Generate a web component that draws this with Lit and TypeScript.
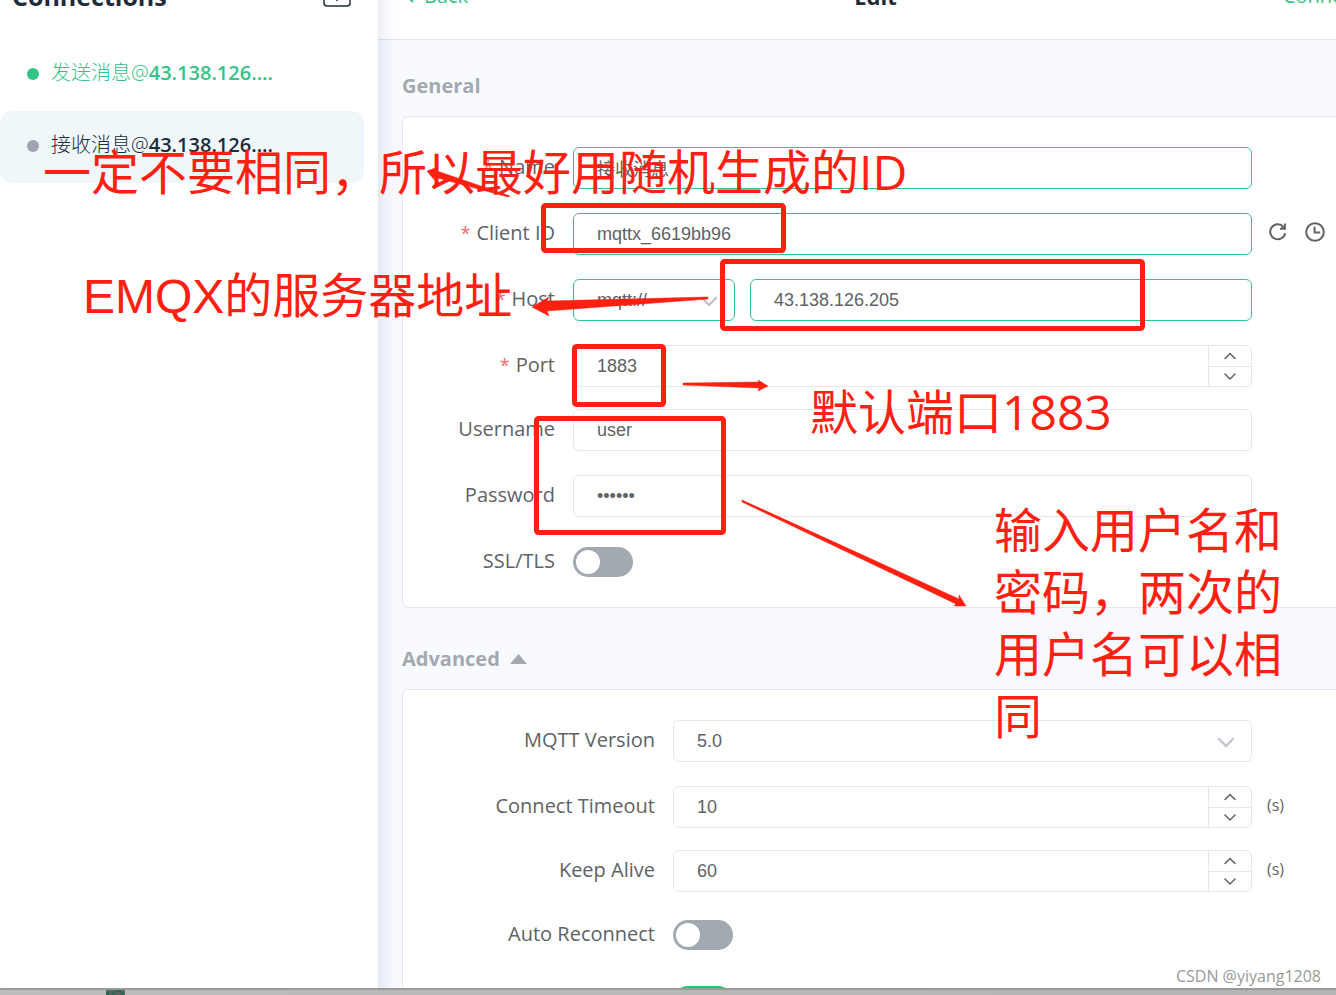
import { LitElement, html, svg, css, nothing } from "lit";
import type { TemplateResult } from "lit";
import { customElement, property, state } from "lit/decorators.js";
import { classMap } from "lit/directives/class-map.js";

interface Connection {
  alias: string;
  host: string;
  online: boolean;
}

@customElement("connection-list")
class ConnectionList extends LitElement {
  static styles = css`
    :host {
      display: block;
      background: #fff;
      color: #1d2b3a;
    }
    .head {
      display: flex;
      align-items: center;
      justify-content: space-between;
      height: 87px;
      padding: 0 27px 0 12px;
    }
    .title {
      margin: 0;
      font-size: 25px;
      line-height: 32px;
      font-weight: 700;
    }
    .add {
      display: flex;
      padding: 0;
      border: 0;
      background: none;
      color: inherit;
    }
    .list {
      margin: 0;
      padding: 0 14px 0 0;
      list-style: none;
    }
    .item {
      display: flex;
      align-items: center;
      gap: 12px;
      box-sizing: border-box;
      height: 72px;
      padding: 0 27px 4px;
      border-radius: 12px;
      color: inherit;
      text-decoration: none;
      font-size: 20px;
      line-height: 28px;
      white-space: nowrap;
    }
    .item.active {
      background: #f0f7fb;
    }
    .item.online {
      color: #34c388;
    }
    .dot {
      flex: none;
      width: 12px;
      height: 12px;
      margin-top: 2px;
      border-radius: 50%;
      background: #a0a3b1;
    }
    .online .dot {
      background: #34c388;
    }
    .alias {
      font-weight: 300;
    }
    .host {
      font-weight: 600;
    }
  `;

  private items: Connection[] = [
    { alias: "发送消息@", host: "43.138.126....", online: true },
    { alias: "接收消息@", host: "43.138.126....", online: false },
  ];

  @state() private active = 1;

  render() {
    return html`
      <header class="head">
        <h1 class="title">Connections</h1>
        <button class="add" aria-label="New connection">
          <svg width="28" height="22" viewBox="0 0 28 22" fill="none" stroke="currentColor" stroke-width="1.5">
            <rect x="1" y="1" width="26" height="20" rx="3" />
            <path d="M14 6v10M9 11h10" />
          </svg>
        </button>
      </header>
      <ul class="list">
        ${this.items.map(
          (c, i) => html`<li>
            <a
              href="#"
              class=${classMap({ item: true, active: i === this.active, online: c.online })}
              @click=${(e: Event) => {
                e.preventDefault();
                this.active = i;
              }}
            >
              <span class="dot"></span>
              <span><span class="alias">${c.alias}</span><span class="host">${c.host}</span></span>
            </a>
          </li>`
        )}
      </ul>
    `;
  }
}

@customElement("connection-form")
class ConnectionForm extends LitElement {
  @property({ type: Boolean }) advanced = true;

  static styles = css`
    :host {
      display: block;
      background: #f9faff;
      color: #606266;
    }
    .page {
      width: calc(100% + 48px);
    }
    .head {
      display: flex;
      align-items: center;
      justify-content: space-between;
      box-sizing: border-box;
      height: 88px;
      padding: 0 24px;
      background: #fff;
      border-bottom: 1px solid #e1e4ee;
    }
    .link {
      display: flex;
      align-items: center;
      gap: 8px;
      padding: 0;
      border: 0;
      background: none;
      color: #34c388;
      font: inherit;
      font-size: 20px;
      line-height: 28px;
      text-decoration: none;
    }
    .title {
      margin: 0;
      color: #1d2b3a;
      font-size: 22px;
      line-height: 28px;
      font-weight: 700;
    }
    .body {
      padding: 0 24px;
    }
    .section {
      display: flex;
      align-items: center;
      gap: 10px;
      margin: 0;
      padding: 32px 0 16px;
      color: #a2a9b0;
      font-size: 20px;
      line-height: 28px;
      font-weight: 700;
    }
    .section.next {
      padding-top: 37px;
    }
    .fold {
      display: flex;
      padding: 0;
      border: 0;
      background: none;
      color: inherit;
    }
    .card {
      display: flex;
      flex-direction: column;
      gap: 24px;
      padding: 30px 0 24px;
      background: #fff;
      border: 1px solid #e4e6f0;
      border-radius: 6px;
    }
    .row {
      display: grid;
      grid-template-columns: 152px 1fr 92px;
      align-items: center;
      height: 42px;
    }
    .wide .row {
      grid-template-columns: 252px 1fr 92px;
    }
    .row.number {
      height: 40px;
    }
    .label {
      padding-bottom: 2px;
      text-align: right;
      font-size: 20px;
      line-height: 28px;
      white-space: nowrap;
    }
    .star {
      margin-right: 6px;
      color: #f56c6c;
      font-size: 18px;
    }
    .control {
      display: flex;
      gap: 15px;
      margin: 0 15px 0 18px;
      min-width: 0;
    }
    .box {
      box-sizing: border-box;
      width: 100%;
      min-width: 0;
      height: 42px;
      padding: 0 23px;
      border: 1px solid #e4e6f0;
      border-radius: 6px;
      outline: none;
      background: #fff;
      color: #606266;
      font: 18px "Liberation Sans", "Noto Sans CJK SC", sans-serif;
      appearance: none;
    }
    .green {
      border-color: #34c388;
    }
    .pick {
      display: grid;
      flex: 1;
      align-items: center;
    }
    .pick.short {
      flex: 0 0 162px;
    }
    .pick > * {
      grid-area: 1 / 1;
    }
    .arrow {
      justify-self: end;
      margin: 4px 17px 0 0;
      color: #c0c4cc;
      pointer-events: none;
    }
    .stepper {
      display: flex;
      box-sizing: border-box;
      width: 100%;
      height: 42px;
      border: 1px solid #e4e6f0;
      border-radius: 6px;
      overflow: hidden;
    }
    .stepper .box {
      flex: 1;
      height: 40px;
      border: 0;
      border-radius: 0;
    }
    .steps {
      display: grid;
      grid-template-rows: 1fr 1fr;
      width: 42px;
      border-left: 1px solid #e4e6f0;
    }
    .step {
      display: grid;
      place-items: center;
      padding: 0;
      border: 0;
      background: none;
      color: #606266;
    }
    .step + .step {
      border-top: 1px solid #e4e6f0;
    }
    .extra {
      display: flex;
      align-items: center;
      gap: 16px;
      padding-bottom: 4px;
      font-size: 16px;
      line-height: 24px;
    }
    .icon {
      display: flex;
      padding: 0;
      border: 0;
      background: none;
      color: #606266;
    }
    .switch {
      box-sizing: border-box;
      width: 60px;
      height: 30px;
      margin: 0;
      padding: 3px;
      border-radius: 15px;
      background: #a2a9b0;
      appearance: none;
    }
    .switch::before {
      content: "";
      display: block;
      width: 24px;
      height: 24px;
      border-radius: 50%;
      background: #fff;
    }
    .switch:checked {
      padding-left: 33px;
      background: #20c871;
    }
  `;

  private row(id: string, label: string, control: TemplateResult, opts: { required?: boolean; number?: boolean; extra?: unknown } = {}) {
    return html`<div class=${classMap({ row: true, number: !!opts.number })}>
      <label class="label" for=${id}>${opts.required ? html`<span class="star">*</span>` : nothing}${label}</label>
      <div class="control">${control}</div>
      <div class="extra">${opts.extra ?? nothing}</div>
    </div>`;
  }

  private chevron() {
    return html`<svg class="arrow" width="18" height="12" viewBox="0 0 18 12" fill="none" stroke="currentColor" stroke-width="2.4" stroke-linecap="round">
      <path d="M2 2l7 7 7-7" />
    </svg>`;
  }

  private stepper(id: string, value: string) {
    const mark = (d: string) => html`<svg width="12" height="8" viewBox="0 0 12 8" fill="none" stroke="currentColor" stroke-width="1.5" stroke-linecap="round"><path d=${d} /></svg>`;
    return html`<div class="stepper">
      <input class="box" id=${id} inputmode="numeric" .value=${value} />
      <div class="steps">
        <button class="step" aria-label="Increase">${mark("M1 6.5l5-5 5 5")}</button>
        <button class="step" aria-label="Decrease">${mark("M1 1l5 5 5-5")}</button>
      </div>
    </div>`;
  }

  render() {
    const idTools = html`
      <button class="icon" aria-label="Refresh">
        <svg width="21" height="22" viewBox="0 0 21 22" fill="none" stroke="currentColor" stroke-width="2">
          <path d="M18.1 12.2A7.5 7.5 0 1 1 16.4 5.9" />
          <path d="M17.9 2.6v5.2h-5" />
          <path d="M14.5 6.6l3 .6" />
        </svg>
      </button>
      <button class="icon" aria-label="History">
        <svg width="22" height="22" viewBox="0 0 22 22" fill="none" stroke="currentColor" stroke-width="2">
          <circle cx="11" cy="11" r="8.8" />
          <path d="M10.6 5.8v5.8h5.6" />
        </svg>
      </button>
    `;
    return html`
      <div class="page">
        <header class="head">
          <a class="link" href="#">
            <svg width="14" height="14" viewBox="0 0 14 14" fill="none" stroke="currentColor" stroke-width="2"><path d="M11 1L5 7l6 6" /></svg>
            Back
          </a>
          <h2 class="title">Edit</h2>
          <button class="link">Connect</button>
        </header>
        <form class="body" @submit=${(e: Event) => e.preventDefault()}>
          <h3 class="section">General</h3>
          <div class="card">
            ${this.row("name", "Name", html`<input class="box green" id="name" .value=${"接收消息"} />`, { required: true })}
            ${this.row("client", "Client ID", html`<input class="box green" id="client" .value=${"mqttx_6619bb96"} />`, { required: true, extra: idTools })}
            ${this.row(
              "host",
              "Host",
              html`<div class="pick short">
                  <select class="box green" aria-label="Protocol"><option>mqtt://</option><option>ws://</option></select>
                  ${this.chevron()}
                </div>
                <input class="box green" id="host" .value=${"43.138.126.205"} />`,
              { required: true }
            )}
            ${this.row("port", "Port", this.stepper("port", "1883"), { required: true, number: true })}
            ${this.row("user", "Username", html`<input class="box" id="user" .value=${"user"} />`)}
            ${this.row("pass", "Password", html`<input class="box" id="pass" type="password" .value=${"public"} />`)}
            ${this.row("ssl", "SSL/TLS", html`<input class="switch" id="ssl" type="checkbox" />`)}
          </div>
          <h3 class="section next">
            Advanced
            <button class="fold" aria-label="Collapse" @click=${() => (this.advanced = !this.advanced)}>
              <svg width="17" height="10" viewBox="0 0 17 10" fill="currentColor"><path d="M8.500 0L17 10H0z" /></svg>
            </button>
          </h3>
          ${this.advanced
            ? html`<div class="card wide">
                ${this.row(
                  "version",
                  "MQTT Version",
                  html`<div class="pick">
                    <select class="box" id="version"><option>5.0</option><option>3.1.1</option></select>
                    ${this.chevron()}
                  </div>`
                )}
                ${this.row("timeout", "Connect Timeout", this.stepper("timeout", "10"), { number: true, extra: "(s)" })}
                ${this.row("alive", "Keep Alive", this.stepper("alive", "60"), { number: true, extra: "(s)" })}
                ${this.row("auto", "Auto Reconnect", html`<input class="switch" id="auto" type="checkbox" />`)}
                ${this.row("clean", "Clean Start", html`<input class="switch" id="clean" type="checkbox" .checked=${true} />`)}
              </div>`
            : nothing}
        </form>
      </div>
    `;
  }
}

@customElement("markup-layer")
class MarkupLayer extends LitElement {
  static styles = css`
    :host {
      position: absolute;
      inset: 0;
      z-index: 2;
      overflow: hidden;
      pointer-events: none;
      color: #ff2011;
    }
    .ink {
      position: absolute;
      inset: 0;
      width: 100%;
      height: 100%;
    }
    .note {
      position: absolute;
      margin: 0;
      font-size: 48px;
      line-height: 62px;
      white-space: nowrap;
    }
    .unique {
      left: 43px;
      top: 141px;
    }
    .server {
      left: 83px;
      top: 266px;
      font-family: "Liberation Sans", "Noto Sans CJK SC", sans-serif;
    }
    .port {
      left: 810px;
      top: 381px;
    }
    .login {
      left: 994px;
      top: 499px;
      width: 288px;
      white-space: normal;
    }
    .credit {
      position: absolute;
      right: 15px;
      bottom: 8px;
      margin: 0;
      color: #999;
      font-size: 16px;
      line-height: 22px;
    }
  `;

  private boxes = [
    [541, 203, 245, 50],
    [720, 259, 425, 72],
    [572, 344, 94, 63],
    [534, 416, 192, 119],
  ];

  private arrows = [
    "M427 171L438 167L437 171L510 196L508 197L434 177L436 182Z",
    "M532 307L549 297L547 301L708 297L708 299L547 311L549 316Z",
    "M768 386L758 380L759 382L683 383L683 385L759 388L758 391Z",
    "M966 606L959 595L959 599L742 500L742 502L956 604L954 606Z",
  ];

  render() {
    return html`
      <svg class="ink">
        ${this.boxes.map(
          ([x, y, w, h]) => svg`<rect x=${x + 2.5} y=${y + 2.5} width=${w - 5} height=${h - 5} rx="2" fill="none" stroke="currentColor" stroke-width="5" />`
        )}
        ${this.arrows.map((d) => svg`<path d=${d} fill="currentColor" stroke="currentColor" stroke-width="0.5" />`)}
      </svg>
      <p class="note unique">一定不要相同，所以最好用随机生成的ID</p>
      <p class="note server">EMQX的服务器地址</p>
      <p class="note port">默认端口1883</p>
      <p class="note login">输入用户名和密码，两次的用户名可以相同</p>
      <p class="credit">CSDN @yiyang1208</p>
    `;
  }
}

@customElement("app-root")
class AppRoot extends LitElement {
  static styles = css`
    :host {
      position: relative;
      display: flex;
      flex-direction: column;
      height: 100vh;
      overflow: hidden;
      font-family: "Open Sans", "Noto Sans CJK SC", sans-serif;
    }
    .window {
      flex: 1;
      min-height: 0;
      overflow: hidden;
    }
    .panes {
      display: grid;
      grid-template-columns: 378px minmax(0, 1fr);
      min-height: 100%;
      margin-top: -48px;
    }
    .side {
      z-index: 1;
      box-shadow: 1px 0 20px rgba(70, 90, 130, 0.2);
    }
    .main {
      overflow: hidden;
    }
    .desk {
      display: flex;
      flex: none;
      height: 5px;
      border-top: 2px solid #999b99;
      background: linear-gradient(90deg, #bcbcbc, #b4b4b4);
    }
    .thumb {
      width: 19px;
      margin-left: 106px;
      background: #5c6361;
    }
    .glyph {
      display: block;
    }
  `;

  render() {
    return html`
      <div class="window">
        <div class="panes">
          <connection-list class="side"></connection-list>
          <connection-form class="main"></connection-form>
        </div>
      </div>
      <div class="desk">
        <div class="thumb">
          <svg class="glyph" width="19" height="5" viewBox="0 0 19 5" fill="none" stroke="#1c6a50" stroke-width="2">
            <path d="M7 6a5 5 0 0 1 10 0M0 2l3 3" />
          </svg>
        </div>
      </div>
      <markup-layer></markup-layer>
    `;
  }
}
